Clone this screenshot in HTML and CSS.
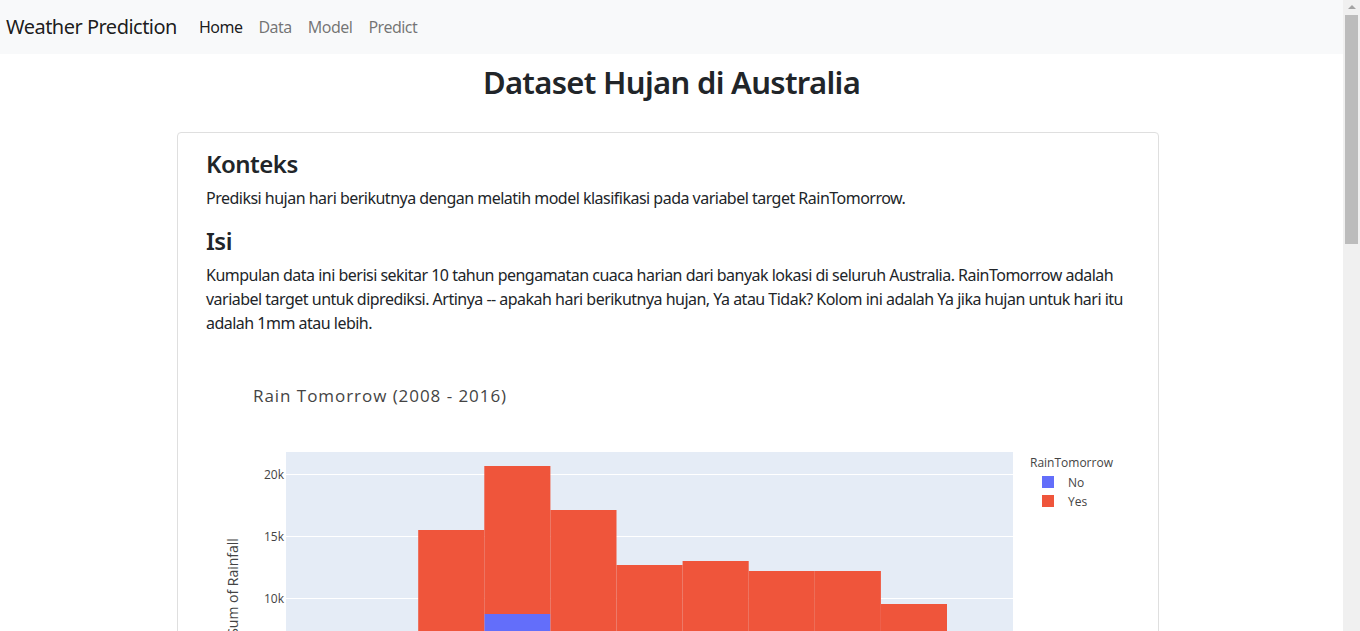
FILE: index.html
```html
<!DOCTYPE html>
<html lang="id">
<head>
<meta charset="utf-8">
<title>Weather Prediction</title>
<link rel="stylesheet" href="styles.css">
</head>
<body>
<nav class="navbar">
  <a class="brand" href="#">Weather Prediction</a>
  <ul class="nav-links">
    <li><a class="nav-link active" href="#">Home</a></li>
    <li><a class="nav-link" href="#">Data</a></li>
    <li><a class="nav-link" href="#">Model</a></li>
    <li><a class="nav-link" href="#">Predict</a></li>
  </ul>
</nav>
<main class="main">
  <h2 class="page-title">Dataset Hujan di Australia</h2>
  <section class="card">
    <h4 class="section-title">Konteks</h4>
    <p class="text">Prediksi hujan hari berikutnya dengan melatih model klasifikasi pada variabel target RainTomorrow.</p>
    <h4 class="section-title">Isi</h4>
    <p class="text">Kumpulan data ini berisi sekitar 10 tahun pengamatan cuaca harian dari banyak lokasi di seluruh Australia. RainTomorrow adalah variabel target untuk diprediksi. Artinya -- apakah hari berikutnya hujan, Ya atau Tidak? Kolom ini adalah Ya jika hujan untuk hari itu adalah 1mm atau lebih.</p>
    <div class="chart">
      <svg class="chart-svg" width="924" height="450" viewBox="0 0 924 450" xmlns="http://www.w3.org/2000/svg">
        <rect x="0" y="0" width="924" height="450" fill="#ffffff"/>
        <rect x="80" y="100" width="727" height="270" fill="#e5ecf6"/>
        <g stroke="#ffffff" stroke-width="1">
          <line x1="80" x2="807" y1="122.5" y2="122.5"/>
          <line x1="80" x2="807" y1="184.5" y2="184.5"/>
          <line x1="80" x2="807" y1="246.5" y2="246.5"/>
          <line x1="80" x2="807" y1="308.5" y2="308.5"/>
        </g>
        <g fill="#636efa">
          <rect x="80" y="362" width="66.1" height="8"/>
          <rect x="146.1" y="345" width="66.1" height="25"/>
          <rect x="212.2" y="300" width="66.1" height="70"/>
          <rect x="278.3" y="262" width="66.1" height="108"/>
          <rect x="344.4" y="295" width="66.1" height="75"/>
          <rect x="410.5" y="312" width="66.1" height="58"/>
          <rect x="476.6" y="306" width="66.1" height="64"/>
          <rect x="542.7" y="312" width="66.1" height="58"/>
          <rect x="608.8" y="314" width="66.1" height="56"/>
          <rect x="674.9" y="326" width="66.1" height="44"/>
          <rect x="741" y="350" width="66" height="20"/>
        </g>
        <g fill="#ef553b">
          <rect x="80" y="355" width="66.1" height="7"/>
          <rect x="146.1" y="320" width="66.1" height="25"/>
          <rect x="212.2" y="178" width="66.1" height="122"/>
          <rect x="278.3" y="114" width="66.1" height="148"/>
          <rect x="344.4" y="158" width="66.1" height="137"/>
          <rect x="410.5" y="213" width="66.1" height="99"/>
          <rect x="476.6" y="209" width="66.1" height="97"/>
          <rect x="542.7" y="219" width="66.1" height="93"/>
          <rect x="608.8" y="219" width="66.1" height="95"/>
          <rect x="674.9" y="252" width="66.1" height="74"/>
          <rect x="741" y="300" width="66" height="50"/>
        </g>
        <g class="tick" text-anchor="end">
          <text x="78" y="126.5">20k</text>
          <text x="78" y="188.5">15k</text>
          <text x="78" y="250.5">10k</text>
          <text x="78" y="312.5">5k</text>
          <text x="78" y="374.5">0</text>
        </g>
        <g class="tick" text-anchor="middle">
          <text x="113" y="388">2008</text>
          <text x="245" y="388">2010</text>
          <text x="377" y="388">2012</text>
          <text x="509" y="388">2014</text>
          <text x="641" y="388">2016</text>
        </g>
        <text class="axis-title" x="443" y="414" text-anchor="middle">Year</text>
        <text class="axis-title" transform="translate(32,235) rotate(-90)" text-anchor="middle">Sum of Rainfall</text>
        <text class="chart-title" x="47" y="50">Rain Tomorrow (2008 - 2016)</text>
        <text class="legend-title" x="824" y="115">RainTomorrow</text>
        <rect x="836" y="124" width="12" height="12" fill="#636efa"/>
        <text class="legend-item" x="862" y="135">No</text>
        <rect x="836" y="143" width="12" height="12" fill="#ef553b"/>
        <text class="legend-item" x="862" y="154">Yes</text>
      </svg>
    </div>
  </section>
</main>
<div class="scrollbar" aria-hidden="true">
  <div class="scroll-arrow"></div>
  <div class="scroll-thumb"></div>
</div>
</body>
</html>
```

FILE: styles.css
```css
* { box-sizing: border-box; }
html, body {
  margin: 0;
  padding: 0;
}
body {
  font-family: "Noto Sans", "Open Sans", sans-serif;
  font-size: 16px;
  line-height: 1.5;
  letter-spacing: -0.032em;
  color: #212529;
  background: #ffffff;
  padding-right: 17px;
}
.scrollbar {
  position: fixed;
  top: 0;
  right: 0;
  width: 17px;
  height: 100%;
  background: #f0f0f0;
  display: flex;
  flex-direction: column;
  align-items: center;
}
.scroll-arrow {
  margin-top: 5px;
  width: 0;
  height: 0;
  border-left: 4px solid transparent;
  border-right: 4px solid transparent;
  border-bottom: 4px solid #a3a3a3;
}
.scroll-thumb {
  margin-top: 6px;
  width: 13px;
  height: 229px;
  background: #bcbcbc;
}
.navbar {
  display: flex;
  align-items: center;
  height: 54px;
  padding: 0 6px;
  background: #f8f9fa;
}
.brand {
  font-size: 20px;
  color: rgba(0,0,0,0.9);
  text-decoration: none;
  margin-right: 22px;
}
.nav-links {
  display: flex;
  list-style: none;
  margin: 0;
  padding: 0;
  gap: 16px;
}
.nav-link {
  color: rgba(0,0,0,0.55);
  text-decoration: none;
  font-size: 16px;
}
.nav-link.active {
  color: rgba(0,0,0,0.9);
}
.main {
  padding: 10px 0 40px;
}
.page-title {
  margin: 0 0 31px;
  text-align: center;
  font-size: 31px;
  font-weight: 600;
  line-height: 1.2;
  letter-spacing: -0.022em;
}
.card {
  width: 982px;
  margin-left: 177px;
  border: 1px solid #dfdfdf;
  border-radius: 4px;
  padding: 17px 28px 0;
  min-height: 1528px;
}
.section-title {
  margin: 0 0 7px;
  font-size: 24px;
  font-weight: 600;
  line-height: 1.2;
}
.text {
  margin: 0 0 17px;
}
.chart {
  margin-top: 10px;
}
.chart-svg {
  display: block;
  font-family: "Open Sans", verdana, arial, sans-serif;
  letter-spacing: 0;
}
.tick { font-size: 12px; fill: #444444; }
.axis-title { font-size: 14px; fill: #444444; }
.chart-title { font-size: 17px; fill: #444444; letter-spacing: 0.95px; }
.legend-title { font-size: 12px; fill: #444444; }
.legend-item { font-size: 12px; fill: #444444; }
```
